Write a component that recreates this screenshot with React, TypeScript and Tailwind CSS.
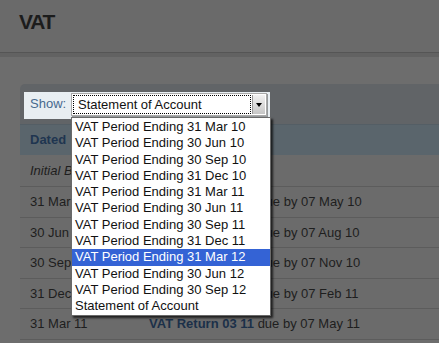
import React from "react";

const periods = [
  "VAT Period Ending 31 Mar 10",
  "VAT Period Ending 30 Jun 10",
  "VAT Period Ending 30 Sep 10",
  "VAT Period Ending 31 Dec 10",
  "VAT Period Ending 31 Mar 11",
  "VAT Period Ending 30 Jun 11",
  "VAT Period Ending 30 Sep 11",
  "VAT Period Ending 31 Dec 11",
  "VAT Period Ending 31 Mar 12",
  "VAT Period Ending 30 Jun 12",
  "VAT Period Ending 30 Sep 12",
  "Statement of Account",
];

const rows = [
  { date: "31 Mar 10", ret: "VAT Return 03 10", due: "due by 07 May 10" },
  { date: "30 Jun 10", ret: "VAT Return 06 10", due: "due by 07 Aug 10" },
  { date: "30 Sep 10", ret: "VAT Return 09 10", due: "due by 07 Nov 10" },
  { date: "31 Dec 10", ret: "VAT Return 12 10", due: "due by 07 Feb 11" },
  { date: "31 Mar 11", ret: "VAT Return 03 11", due: "due by 07 May 11" },
];

export default function App() {
  return (
    <div
      className="relative w-[439px] h-[343px] overflow-hidden bg-[#6d6d6d] text-[13px] text-[#1e1e1e]"
      style={{ fontFamily: '"Liberation Sans", Arial, Helvetica, sans-serif' }}
    >
      {/* Header */}
      <div className="h-[52px] bg-[#6a6a6a] pl-[19px] pt-[11px]">
        <div className="text-[21px] font-bold leading-none tracking-[-1.3px] text-[#1c1c1c]">VAT</div>
      </div>
      <div className="h-[5px] border-t border-[#555555] bg-[#626262]" />

      {/* Body */}
      <div className="pt-[27px] pl-[20px]">
        <div className="rounded-tl-[5px] bg-[#616467]">
          <div className="pt-[8px] pl-[4px] pb-[5px]">
            <div className="w-[246px] h-[27px] bg-[#e8eef2] flex items-start pt-[1px]">
              <span className="pl-[6px] w-[47px] leading-[22px] text-[#476a8e]">Show:</span>
              <div className="w-[196px] h-[23px] bg-white border border-[#a9a9a9] flex shadow-[1px_1px_0_rgba(0,0,0,0.35)]">
                <div className="flex-1 m-[1px] border border-dotted border-black pl-[4px] leading-[17px] text-[#111]">
                  Statement of Account
                </div>
                <div className="w-[13px] my-[1px] mr-[1px] bg-gradient-to-b from-[#f2f2f2] to-[#c6c6c6] border-l border-[#9a9a9a] flex items-center justify-center">
                  <div className="w-0 h-0 border-l-[3.5px] border-r-[3.5px] border-t-[4px] border-l-transparent border-r-transparent border-t-black" />
                </div>
              </div>
            </div>
          </div>

          {/* Table header */}
          <div className="h-[31px] border-t border-[#545e65] bg-[#5a656c] flex items-center pl-[10px]">
            <span className="font-bold text-[#1f3550]">Dated</span>
          </div>

          {/* Initial balance row */}
          <div className="h-[32px] border-b border-[#5c5c5c] bg-[#6b6b6b] flex items-center pl-[10px]">
            <span className="italic">Initial Balance</span>
          </div>

          {rows.map((r) => (
            <div
              key={r.date}
              className="h-[30.6px] border-b border-[#5c5c5c] bg-[#6b6b6b] flex items-center"
            >
              <span className="w-[129px] pl-[10px] shrink-0">{r.date}</span>
              <span className="whitespace-nowrap">
                <span className="font-bold text-[#1b3049]">{r.ret}</span> {r.due}
              </span>
            </div>
          ))}
        </div>
      </div>

      {/* Dropdown list */}
      <div className="absolute left-[71px] top-[117px] w-[200px] bg-white border border-[#6a6a6a] pt-[1px] shadow-[2px_2px_2px_rgba(0,0,0,0.7)]">
        {periods.map((p, i) => (
          <div
            key={p}
            className={
              i === 8
                ? "h-[16.3px] leading-[16.3px] pl-[3px] bg-[#3463d5] text-white whitespace-nowrap"
                : "h-[16.3px] leading-[16.3px] pl-[3px] text-[#111] whitespace-nowrap"
            }
          >
            {p}
          </div>
        ))}
      </div>
    </div>
  );
}
